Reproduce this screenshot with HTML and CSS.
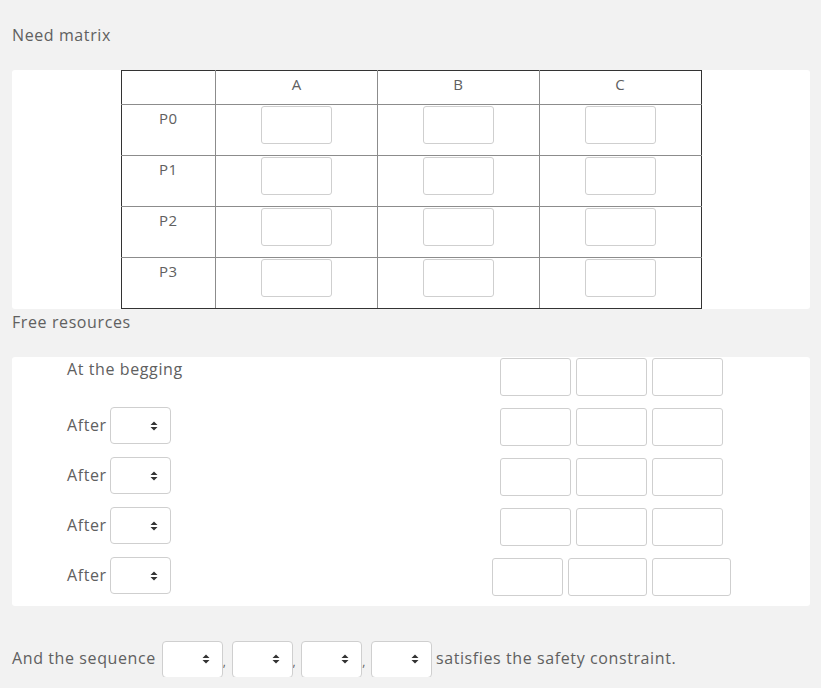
FILE: index.html
```html
<!DOCTYPE html>
<html lang="en">
<head>
<meta charset="utf-8">
<title>Need matrix</title>
<link rel="stylesheet" href="styles.css">
</head>
<body>
<div class="page">
  <div class="label top">Need matrix</div>
  <div class="panel matrix-panel">
    <table class="matrix">
      <colgroup><col class="c0"><col class="c1"><col class="c1"><col class="c1"></colgroup>
      <tr class="head"><td></td><td>A</td><td>B</td><td>C</td></tr>
      <tr><td>P0</td><td><input class="cell"></td><td><input class="cell"></td><td><input class="cell"></td></tr>
      <tr><td>P1</td><td><input class="cell"></td><td><input class="cell"></td><td><input class="cell"></td></tr>
      <tr><td>P2</td><td><input class="cell"></td><td><input class="cell"></td><td><input class="cell"></td></tr>
      <tr><td>P3</td><td><input class="cell"></td><td><input class="cell"></td><td><input class="cell"></td></tr>
    </table>
  </div>
  <div class="label free">Free resources</div>
  <div class="panel res-panel">
    <div class="res-row">
      <div class="res-left"><span class="res-text">At the begging</span></div>
      <div class="res-right"><input class="cell"><input class="cell"><input class="cell"></div>
    </div>
    <div class="res-row">
      <div class="res-left"><span class="res-text">After</span><span class="sel"><select></select><svg class="arr" viewBox="0 0 8 10" width="8" height="10"><path d="M4 0.5 7.5 4H0.5Z M4 9.5 7.5 6H0.5Z"/></svg></span></div>
      <div class="res-right"><input class="cell"><input class="cell"><input class="cell"></div>
    </div>
    <div class="res-row">
      <div class="res-left"><span class="res-text">After</span><span class="sel"><select></select><svg class="arr" viewBox="0 0 8 10" width="8" height="10"><path d="M4 0.5 7.5 4H0.5Z M4 9.5 7.5 6H0.5Z"/></svg></span></div>
      <div class="res-right"><input class="cell"><input class="cell"><input class="cell"></div>
    </div>
    <div class="res-row">
      <div class="res-left"><span class="res-text">After</span><span class="sel"><select></select><svg class="arr" viewBox="0 0 8 10" width="8" height="10"><path d="M4 0.5 7.5 4H0.5Z M4 9.5 7.5 6H0.5Z"/></svg></span></div>
      <div class="res-right"><input class="cell"><input class="cell"><input class="cell"></div>
    </div>
    <div class="res-row last">
      <div class="res-left"><span class="res-text">After</span><span class="sel"><select></select><svg class="arr" viewBox="0 0 8 10" width="8" height="10"><path d="M4 0.5 7.5 4H0.5Z M4 9.5 7.5 6H0.5Z"/></svg></span></div>
      <div class="res-right"><input class="cell"><input class="cell wide"><input class="cell wide"></div>
    </div>
  </div>
  <div class="sequence">
    <span class="seq-text">And the sequence</span>
    <span class="sel"><select></select><svg class="arr" viewBox="0 0 8 10" width="8" height="10"><path d="M4 0.5 7.5 4H0.5Z M4 9.5 7.5 6H0.5Z"/></svg></span><span class="comma">,</span>
    <span class="sel"><select></select><svg class="arr" viewBox="0 0 8 10" width="8" height="10"><path d="M4 0.5 7.5 4H0.5Z M4 9.5 7.5 6H0.5Z"/></svg></span><span class="comma">,</span>
    <span class="sel"><select></select><svg class="arr" viewBox="0 0 8 10" width="8" height="10"><path d="M4 0.5 7.5 4H0.5Z M4 9.5 7.5 6H0.5Z"/></svg></span><span class="comma">,</span>
    <span class="sel"><select></select><svg class="arr" viewBox="0 0 8 10" width="8" height="10"><path d="M4 0.5 7.5 4H0.5Z M4 9.5 7.5 6H0.5Z"/></svg></span>
    <span class="seq-text">satisfies the safety constraint.</span>
  </div>
</div>
</body>
</html>
```

FILE: styles.css
```css
html, body {
  margin: 0;
  padding: 0;
  background: #f2f2f2;
}
body {
  font-family: "Open Sans", "Liberation Sans", sans-serif;
  font-size: 16px;
  letter-spacing: 0.6px;
  color: #606060;
}
.page {
  padding: 23px 11px 0 12px;
}
.label {
  line-height: 24px;
}
.label.top {
  margin-bottom: 23px;
}
.label.free {
  line-height: 26px;
  margin-bottom: 22px;
}
.panel {
  background: #fff;
  border-radius: 3px;
}
.matrix-panel {
  display: flex;
  justify-content: center;
}
.matrix {
  border-collapse: collapse;
  width: 581px;
  font-size: 15px;
  letter-spacing: 0.5px;
  text-align: center;
}
.matrix col.c0 { width: 95px; }
.matrix col.c1 { width: 162px; }
.matrix td {
  border: 1px solid #8c8c8c;
  padding: 1px;
  vertical-align: top;
  line-height: 24px;
}
.matrix tr { height: 51px; }
.matrix tr.head { height: 34px; }
.matrix tr.head td { border-top-color: #333; }
.matrix tr:last-child td { border-bottom-color: #333; }
.matrix td:first-child { border-left-color: #333; }
.matrix td:last-child { border-right-color: #333; }
.cell {
  box-sizing: border-box;
  width: 71px;
  height: 38px;
  border: 1px solid #cfcfcf;
  border-radius: 3px;
  background: #fff;
  margin: 0;
  padding: 0;
  font: inherit;
}
.matrix .cell {
  display: block;
  margin: 0 auto;
}
.res-panel {
  display: flex;
  flex-direction: column;
}
.res-row {
  display: grid;
  grid-template-columns: 400px 1fr;
  height: 50px;
}
.res-row.last { height: 49px; }
.res-left {
  padding: 0 0 0 55px;
  display: flex;
  align-items: flex-start;
}
.res-text {
  line-height: 24px;
}
.res-row:not(:first-child) .res-text {
  line-height: 37px;
}
.res-right {
  display: flex;
  justify-content: center;
  gap: 5px;
  padding-top: 1px;
}
.cell.wide { width: 79px; }
.res-left .sel { margin-left: 3px; }
.sel {
  position: relative;
  display: inline-block;
  width: 61px;
  height: 37px;
  vertical-align: middle;
}
.sel select {
  -webkit-appearance: none;
  appearance: none;
  box-sizing: border-box;
  width: 100%;
  height: 100%;
  border: 1px solid #cfcfcf;
  border-radius: 4px;
  background: #fff;
  margin: 0;
  padding: 0;
}
.sel .arr {
  position: absolute;
  right: 13px;
  top: 14px;
  fill: #333;
  pointer-events: none;
}
.sequence {
  margin-top: 34px;
  line-height: 37px;
  display: flex;
  align-items: center;
}
.sequence .sel { margin-left: 6px; width: 61px; }
.sequence .comma + .sel { margin-left: 5px; }
.comma {
  margin: 0;
  font-size: 12px;
  align-self: flex-end;
  line-height: 30px;
}
.sequence .seq-text:last-child { margin-left: 4px; }
```
